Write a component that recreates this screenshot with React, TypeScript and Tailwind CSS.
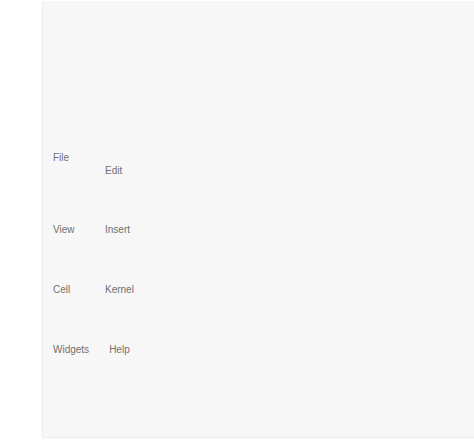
import React from "react";

const item = "text-[10px] leading-[14px] text-[#707070]";

export default function App() {
  const rows: [string, string][] = [
    ["View", "Insert"],
    ["Cell", "Kernel"],
    ["Widgets", "Help"],
  ];
  return (
    <div
      className="w-[474px] h-[441px] bg-white pl-[42px] pt-[1px]"
      style={{ fontFamily: '"Liberation Sans", Arial, sans-serif' }}
    >
      <div className="h-[437px] bg-[#f7f7f7] border-l border-b border-[#ececec] pl-[10px] pt-[150px]">
        <div className="flex h-[72px] items-start">
          <div className={`${item} min-w-[52px] pr-[20px] box-border`}>File</div>
          <div className={`${item} mt-[13px]`}>Edit</div>
        </div>
        {rows.map(([a, b]) => (
          <div key={a} className="flex h-[60px] items-start">
            <div className={`${item} min-w-[52px] pr-[20px] box-border`}>{a}</div>
            <div className={item}>{b}</div>
          </div>
        ))}
      </div>
    </div>
  );
}
